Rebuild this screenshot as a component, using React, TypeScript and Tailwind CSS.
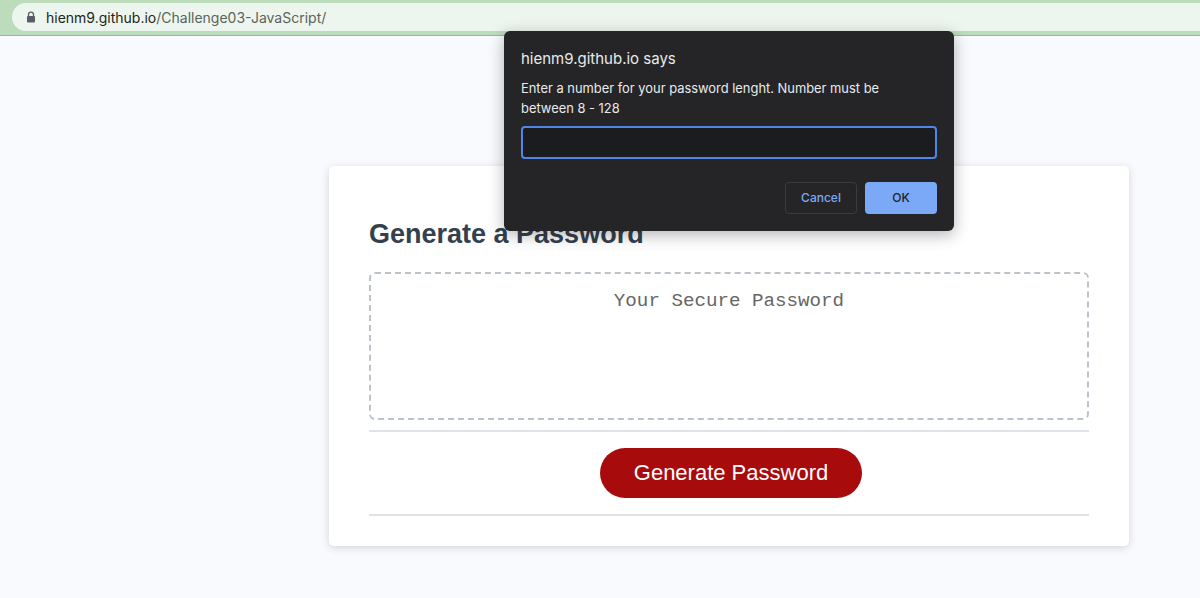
function AddressBar() {
	return (
		<div className="h-9 bg-[#bcdcbc] border-b border-[#9cb89c] pt-[3px] pl-3">
			<div className="h-[28px] bg-[#edf6ee] rounded-l-full flex items-center pl-[14px] gap-[10px] font-['Inter',sans-serif] text-[14px]">
				<svg width="10" height="12" viewBox="0 0 10 12" className="shrink-0">
					<path d="M2.5 5.5V3.6a2.5 2.5 0 0 1 5 0v1.9" fill="none" stroke="#5a5d63" strokeWidth="1.3" />
					<rect x="1" y="5" width="8" height="6.5" rx="1" fill="#5a5d63" />
				</svg>
				<span className="text-[#1f2421]">
					hienm9.github.io
					<span className="text-[#5a635c]">/Challenge03-JavaScript/</span>
				</span>
			</div>
		</div>
	);
}

function PromptDialog() {
	return (
		<div className="absolute left-[504px] top-[31px] w-[450px] h-[200px] bg-[#252527] rounded-[6px] shadow-[0_4px_16px_rgba(0,0,0,0.3)] px-[17px] pt-[19px] font-['Inter',sans-serif] text-[#e8eaed]">
			<div className="text-[15px] leading-[18px]">hienm9.github.io says</div>
			<p className="mt-[11px] pr-10 text-[12.9px] leading-[20px]">
				Enter a number for your password lenght. Number must be between 8 - 128
			</p>
			<div className="mt-[7px] h-[33px] bg-[#1a1c20] border-2 border-[#4f86e8] rounded-[4px]" />
			<div className="mt-[23px] flex justify-end gap-2">
				<button className="w-[72px] h-8 border border-[#3a3b3e] rounded text-[12px] font-medium text-[#7baaf7]">
					Cancel
				</button>
				<button className="w-[72px] h-8 bg-[#7ba9f8] rounded text-[12px] font-medium text-[#202124]">
					OK
				</button>
			</div>
		</div>
	);
}

export default function App() {
	return (
		<div className="relative h-[598px] overflow-hidden bg-[#f9fafe] font-['Liberation_Sans',sans-serif]">
			<AddressBar />
			<main className="pl-[329px] pt-[130px]">
				<div className="w-[800px] h-[380px] bg-white rounded-[5px] shadow-[0_2px_8px_rgba(0,0,0,0.15)] px-10 pt-[50px]">
					<h2 className="text-[27px] leading-[36px] font-bold text-[#33414e]">
						Generate a Password
					</h2>
					<textarea
						readOnly
						placeholder="Your Secure Password"
						className="block w-full h-[148px] mt-[20px] border-2 border-dashed border-[#bcc3ca] rounded-md bg-white text-center resize-none pt-4 font-['Liberation_Mono',monospace] text-[19.2px] leading-[23px] placeholder:text-[#666666] outline-none"
					/>
					<hr className="mt-[10px] border-0 border-t-2 border-[#dfe3e8]" />
					<div className="flex justify-center mt-4">
						<button className="ml-1 w-[262px] h-[50px] pb-[2px] rounded-[25px] bg-[#a80b0b] text-white text-[22px]">
							Generate Password
						</button>
					</div>
					<hr className="mt-4 border-0 border-t-2 border-[#dfe3e8]" />
				</div>
			</main>
			<PromptDialog />
		</div>
	);
}
